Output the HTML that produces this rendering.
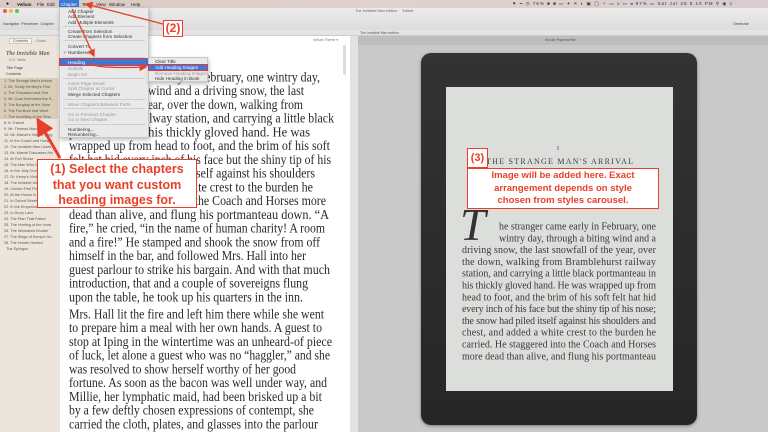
<!DOCTYPE html>
<html><head><meta charset="utf-8"><style>
*{margin:0;padding:0;box-sizing:border-box}
body{width:768px;height:432px;overflow:hidden;position:relative;background:#c9c9c9;font-family:"Liberation Sans",sans-serif}
.a{position:absolute}
.mi{position:absolute;left:8px;font-size:4.6px;color:#333;white-space:nowrap}
.mi.g{color:#9a9a9a}
.sep{position:absolute;left:3px;right:3px;height:1px;background:#cfcfcf}
.sb{position:absolute;left:4px;font-size:3.8px;color:#555;white-space:nowrap}
</style></head><body>
<div class="a" style="left:0;top:0;width:768px;height:8px;background:linear-gradient(90deg,#d9c9c2,#e0d2cc 50%,#d8ccd0)"></div>
<div class="a" style="left:6px;top:1px;font-size:5px;color:#111">●</div>
<div class="a" style="left:17px;top:1.5px;font-size:4.5px;color:#222;font-weight:bold">Vellum</div>
<div class="a" style="left:37px;top:1.5px;font-size:4.5px;color:#222">File</div>
<div class="a" style="left:47px;top:1.5px;font-size:4.5px;color:#222">Edit</div>
<div class="a" style="left:59px;top:0;width:20px;height:8px;background:#3b78d8"></div>
<div class="a" style="left:61px;top:1.5px;font-size:4.5px;color:#fff">Chapter</div>
<div class="a" style="left:82px;top:1.5px;font-size:4.5px;color:#222">Text</div>
<div class="a" style="left:96px;top:1.5px;font-size:4.5px;color:#222">View</div>
<div class="a" style="left:109px;top:1.5px;font-size:4.5px;color:#222">Window</div>
<div class="a" style="left:131px;top:1.5px;font-size:4.5px;color:#222">Help</div>
<div class="a" style="left:512px;top:1px;width:230px;height:6px;font-size:4.5px;color:#333;letter-spacing:1px;white-space:nowrap">▼ ━ ◷ 76% ■ ■ ▭ ✦ ✕ ◐ ▣ ◯ ✧ ▭ ≡ ▭ ◂ 97% ▭ Sat Jul 28 8:10 PM ⚲ ◉ ≡</div>
<div class="a" style="left:0;top:8px;width:768px;height:22px;background:linear-gradient(#ececec,#dcdcdc)"></div>
<div class="a" style="left:3px;top:9px;width:4px;height:4px;border-radius:50%;background:#ee5a52"></div>
<div class="a" style="left:9px;top:9px;width:4px;height:4px;border-radius:50%;background:#f4bd3b"></div>
<div class="a" style="left:15px;top:9px;width:4px;height:4px;border-radius:50%;background:#5cc44a"></div>
<div class="a" style="left:3px;top:22px;font-size:3.8px;color:#444;white-space:nowrap">Navigator &nbsp;Previewer &nbsp;Chapter</div>
<div class="a" style="left:355px;top:9px;font-size:3.8px;color:#666">The Invisible Man edition &nbsp;·&nbsp; Edited</div>
<div class="a" style="left:733px;top:22px;font-size:3.8px;color:#444">Generate</div>
<div class="a" style="left:0;top:30px;width:768px;height:6px;background:#e4e4e4;border-bottom:1px solid #ccc"></div>
<div class="a" style="left:360px;top:31px;font-size:3.5px;color:#555">The Invisible Man edition</div>
<div class="a" style="left:0;top:36px;width:60px;height:396px;background:#ebe5dc"></div>
<div class="a" style="left:9px;top:38px;width:23px;height:6px;background:#f6f2ec;border:1px solid #cfc7bb;font-size:3.8px;color:#555;text-align:center">Contents</div>
<div class="a" style="left:36px;top:39px;font-size:3.8px;color:#777">Goals</div>
<div class="a" style="left:6px;top:51px;font-size:6px;font-style:italic;font-family:'Liberation Serif',serif;color:#333">The Invisible Man</div>
<div class="a" style="left:9px;top:58px;font-size:3.5px;color:#777">H.G. Wells</div>
<div class="a" style="left:6px;top:66px;font-size:3.8px;color:#444">Title Page</div>
<div class="a" style="left:6px;top:72px;font-size:3.8px;color:#444">Contents</div>
<div class="a" style="left:0;top:78px;width:58px;height:41px;background:#d9cdb6"></div>
<div class="sb" style="top:79px">1. The Strange Man's Arrival</div>
<div class="sb" style="top:85px">2. Mr. Teddy Henfrey's First</div>
<div class="sb" style="top:91px">3. The Thousand and One</div>
<div class="sb" style="top:97px">4. Mr. Cuss Interviews the S...</div>
<div class="sb" style="top:103px">5. The Burglary at the Vicar</div>
<div class="sb" style="top:109px">6. The Furniture that Went</div>
<div class="sb" style="top:115px">7. The Unveiling of the Stra...</div>
<div class="sb" style="top:121px">8. In Transit</div>
<div class="sb" style="top:127px">9. Mr. Thomas Marvel</div>
<div class="sb" style="top:133px">10. Mr. Marvel's Visit to Iping</div>
<div class="sb" style="top:139px">11. In the Coach and Horses</div>
<div class="sb" style="top:145px">12. The Invisible Man Loses</div>
<div class="sb" style="top:151px">13. Mr. Marvel Discusses His</div>
<div class="sb" style="top:157px">14. At Port Stowe</div>
<div class="sb" style="top:163px">15. The Man Who Was Running</div>
<div class="sb" style="top:169px">16. In the Jolly Cricketers</div>
<div class="sb" style="top:175px">17. Dr. Kemp's Visitor</div>
<div class="sb" style="top:181px">18. The Invisible Man Sleeps</div>
<div class="sb" style="top:187px">19. Certain First Principles</div>
<div class="sb" style="top:193px">20. At the House in Great</div>
<div class="sb" style="top:199px">21. In Oxford Street</div>
<div class="sb" style="top:205px">22. In the Emporium</div>
<div class="sb" style="top:211px">23. In Drury Lane</div>
<div class="sb" style="top:217px">24. The Plan That Failed</div>
<div class="sb" style="top:223px">25. The Hunting of the Invisi</div>
<div class="sb" style="top:229px">26. The Wicksteed Murder</div>
<div class="sb" style="top:235px">27. The Siege of Kemp's Ho...</div>
<div class="sb" style="top:241px">28. The Hunter Hunted</div>
<div class="sb" style="top:247px;left:6px">The Epilogue</div>
<div class="a" style="left:60px;top:36px;width:290px;height:396px;background:#fff"></div>
<div class="a" style="left:313px;top:38px;font-size:3.5px;color:#777">Vellum Theme ▾</div>
<div class="a" style="left:343px;top:45px;width:3px;height:30px;background:#ddd;border-radius:2px"></div>
<div class="a" style="left:350px;top:36px;width:8px;height:396px;background:#e2e2e2"></div>
<div class="a" style="left:358px;top:36px;width:410px;height:9px;background:#bdbdbd"></div>
<div class="a" style="left:545px;top:38px;font-size:3.8px;color:#555">Kindle Paperwhite</div>
<svg class="a" style="left:0;top:0" width="768" height="432" font-family="Liberation Serif,serif">
<g font-size="13.5" fill="#2a2a2a">
<text x="69" y="81.5" textLength="251" lengthAdjust="spacingAndGlyphs">The stranger came early in February, one wintry day,</text>
<text x="69" y="95.2" textLength="235" lengthAdjust="spacingAndGlyphs">through a biting wind and a driving snow, the last</text>
<text x="69" y="109" textLength="234" lengthAdjust="spacingAndGlyphs">snowfall of the year, over the down, walking from</text>
<text x="69" y="122.7" textLength="265" lengthAdjust="spacingAndGlyphs">Bramblehurst railway station, and carrying a little black</text>
<text x="69" y="136.5" textLength="241" lengthAdjust="spacingAndGlyphs">portmanteau in his thickly gloved hand. He was</text>
<text x="69" y="150.2" textLength="261" lengthAdjust="spacingAndGlyphs">wrapped up from head to foot, and the brim of his soft</text>
<text x="69" y="164" textLength="262" lengthAdjust="spacingAndGlyphs">felt hat hid every inch of his face but the shiny tip of his</text>
<text x="69" y="177.7" textLength="246" lengthAdjust="spacingAndGlyphs">nose; the snow had piled itself against his shoulders</text>
<text x="69" y="191.5" textLength="244" lengthAdjust="spacingAndGlyphs">and chest, and added a white crest to the burden he</text>
<text x="69" y="205.2" textLength="257" lengthAdjust="spacingAndGlyphs">carried. He staggered into the Coach and Horses more</text>
<text x="69" y="219" textLength="260" lengthAdjust="spacingAndGlyphs">dead than alive, and flung his portmanteau down. “A</text>
<text x="69" y="232.7" textLength="256" lengthAdjust="spacingAndGlyphs">fire,” he cried, “in the name of human charity! A room</text>
<text x="69" y="246.5" textLength="251" lengthAdjust="spacingAndGlyphs">and a fire!” He stamped and shook the snow from off</text>
<text x="69" y="260.2" textLength="237" lengthAdjust="spacingAndGlyphs">himself in the bar, and followed Mrs. Hall into her</text>
<text x="69" y="274" textLength="261" lengthAdjust="spacingAndGlyphs">guest parlour to strike his bargain. And with that much</text>
<text x="69" y="287.7" textLength="239" lengthAdjust="spacingAndGlyphs">introduction, that and a couple of sovereigns flung</text>
<text x="69" y="301.5" textLength="234" lengthAdjust="spacingAndGlyphs">upon the table, he took up his quarters in the inn.</text>
<text x="69" y="318.5" textLength="255" lengthAdjust="spacingAndGlyphs">Mrs. Hall lit the fire and left him there while she went</text>
<text x="69" y="332.2" textLength="253" lengthAdjust="spacingAndGlyphs">to prepare him a meal with her own hands. A guest to</text>
<text x="69" y="346" textLength="263" lengthAdjust="spacingAndGlyphs">stop at Iping in the wintertime was an unheard-of piece</text>
<text x="69" y="359.7" textLength="261" lengthAdjust="spacingAndGlyphs">of luck, let alone a guest who was no “haggler,” and she</text>
<text x="69" y="373.5" textLength="227" lengthAdjust="spacingAndGlyphs">was resolved to show herself worthy of her good</text>
<text x="69" y="387.2" textLength="258" lengthAdjust="spacingAndGlyphs">fortune. As soon as the bacon was well under way, and</text>
<text x="69" y="401" textLength="253" lengthAdjust="spacingAndGlyphs">Millie, her lymphatic maid, had been brisked up a bit</text>
<text x="69" y="414.7" textLength="245" lengthAdjust="spacingAndGlyphs">by a few deftly chosen expressions of contempt, she</text>
<text x="69" y="428.5" textLength="249" lengthAdjust="spacingAndGlyphs">carried the cloth, plates, and glasses into the parlour</text>
</g>
</svg>
<div class="a" style="left:421px;top:53px;width:276px;height:372px;border-radius:10px;background:linear-gradient(#333,#262626);box-shadow:0 1px 3px rgba(0,0,0,.4)"></div>
<div class="a" style="left:446px;top:87px;width:227px;height:304px;background:#dcdedb"></div>
<svg class="a" style="left:0;top:0" width="768" height="432" font-family="Liberation Serif,serif">
<text x="558" y="150" font-size="6" fill="#444" text-anchor="middle">I</text>
<text x="486" y="164" font-size="8" fill="#444" textLength="147" lengthAdjust="spacing">THE STRANGE MAN'S ARRIVAL</text>
<text x="460" y="240" font-size="46" font-style="italic" fill="#333">T</text>
<g font-size="10" fill="#3a3a3a">
<text x="499" y="229.5" textLength="157" lengthAdjust="spacing">he stranger came early in February, one</text>
<text x="499" y="241.3" textLength="157" lengthAdjust="spacing">wintry day, through a biting wind and a</text>
<text x="462" y="253.1" textLength="194" lengthAdjust="spacing">driving snow, the last snowfall of the year, over</text>
<text x="462" y="264.9" textLength="194" lengthAdjust="spacing">the down, walking from Bramblehurst railway</text>
<text x="462" y="276.7" textLength="194" lengthAdjust="spacing">station, and carrying a little black portmanteau in</text>
<text x="462" y="288.5" textLength="194" lengthAdjust="spacing">his thickly gloved hand. He was wrapped up from</text>
<text x="462" y="300.3" textLength="194" lengthAdjust="spacing">head to foot, and the brim of his soft felt hat hid</text>
<text x="462" y="312.1" textLength="194" lengthAdjust="spacing">every inch of his face but the shiny tip of his nose;</text>
<text x="462" y="323.9" textLength="194" lengthAdjust="spacing">the snow had piled itself against his shoulders and</text>
<text x="462" y="335.7" textLength="194" lengthAdjust="spacing">chest, and added a white crest to the burden he</text>
<text x="462" y="347.5" textLength="194" lengthAdjust="spacing">carried. He staggered into the Coach and Horses</text>
<text x="462" y="359.3" textLength="194" lengthAdjust="spacing">more dead than alive, and flung his portmanteau</text>
</g>
</svg>
<div class="a" style="left:59px;top:7px;width:90px;height:131px;background:#e9e9e9;border:1px solid #c8c8c8;box-shadow:1px 2px 4px rgba(0,0,0,.25)">
<div class="mi" style="top:1px">Add Chapter</div>
<div class="mi" style="top:6px">Add Element</div>
<div class="mi" style="top:12px">Add Multiple Elements</div>
<div class="sep" style="top:18px"></div>
<div class="mi" style="top:21px">Create from Selection</div>
<div class="mi" style="top:26px">Create Chapters from Selection</div>
<div class="sep" style="top:32px"></div>
<div class="mi" style="top:36px">Convert To</div>
<div class="mi" style="top:42px;left:3px">✓ Numbered</div>
<div class="sep" style="top:49px"></div>
<div class="a" style="left:0;top:51px;width:88px;height:6px;background:#3b78d8;outline:1px solid #e33"></div>
<div class="mi" style="top:51.5px;color:#fff">Heading</div>
<div class="mi g" style="top:58px">Subtitle</div>
<div class="mi g" style="top:64px">Begin On</div>
<div class="sep" style="top:70px"></div>
<div class="mi g" style="top:73px">Insert Page Break</div>
<div class="mi g" style="top:78px">Split Chapter at Cursor</div>
<div class="mi" style="top:84px">Merge Selected Chapters</div>
<div class="sep" style="top:91px"></div>
<div class="mi g" style="top:94px">Move Chapters Between Parts</div>
<div class="sep" style="top:100px"></div>
<div class="mi g" style="top:104px">Go to Previous Chapter</div>
<div class="mi g" style="top:109px">Go to Next Chapter</div>
<div class="sep" style="top:116px"></div>
<div class="mi" style="top:119px">Numbering...</div>
<div class="mi" style="top:124px">Renumbering...</div>
</div>
<div class="a" style="left:148px;top:57px;width:60px;height:25px;background:#e9e9e9;border:1px solid #c8c8c8;box-shadow:1px 2px 4px rgba(0,0,0,.25)">
<div class="mi" style="top:1px;left:6px">Clear Title</div>
<div class="a" style="left:0;top:7px;width:58px;height:5px;background:#3b78d8;outline:1px solid #e33"></div>
<div class="mi" style="top:7px;left:6px;color:#fff">Add Heading Images</div>
<div class="mi g" style="top:13px;left:6px">Remove Heading Images</div>
<div class="mi" style="top:18px;left:6px">Hide Heading in Book</div>
</div>
<div class="a" style="left:163px;top:20px;width:20px;height:17px;background:#fff;border:1px solid #e8402a;color:#e8402a;font-weight:bold;font-size:12px;text-align:center;line-height:15px">(2)</div>
<div class="a" style="left:37px;top:159px;width:160px;height:49px;background:#fff;border:1px solid #e8402a;color:#e8402a;font-weight:bold;font-size:12.5px;text-align:center;line-height:15.5px;padding-top:2px">(1) Select the chapters<br>that you want custom<br>heading images for.</div>
<div class="a" style="left:467px;top:148px;width:21px;height:20px;background:#fff;border:1px solid #e8402a;color:#e8402a;font-weight:bold;font-size:11px;text-align:center;line-height:18px">(3)</div>
<div class="a" style="left:467px;top:168px;width:192px;height:41px;background:#fff;border:1px solid #e8402a;color:#e8402a;font-weight:bold;font-size:9.5px;text-align:center;line-height:12.6px;padding-top:1px">Image will be added here. Exact<br>arrangement depends on style<br>chosen from styles carousel.</div>
<svg class="a" style="left:0;top:0" width="768" height="432">
<defs><marker id="h" markerWidth="6" markerHeight="6" refX="5" refY="3" orient="auto"><path d="M0,0 L6,3 L0,6 Z" fill="#e8402a"/></marker></defs>
<g stroke="#e8402a" stroke-width="1.3" fill="none" marker-end="url(#h)">
<path d="M163,24 L86,4"/>
<path d="M72,9 L94,56"/>
<path d="M89,63 Q95,69 146,67"/>
<path d="M60,158 L38,120" stroke-width="3"/>
</g>
</svg>
</body></html>
